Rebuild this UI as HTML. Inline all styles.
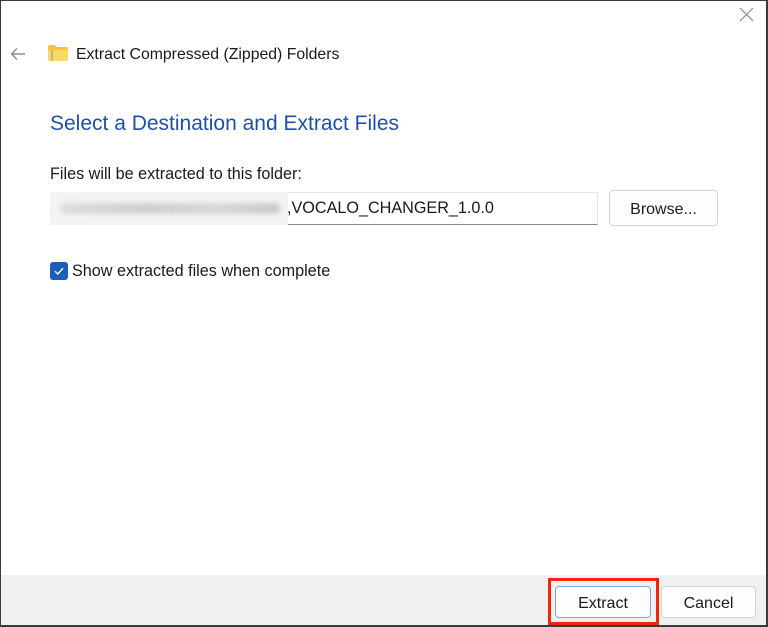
<!DOCTYPE html>
<html><head><meta charset="utf-8"><style>
*{margin:0;padding:0;box-sizing:border-box}
body{width:768px;height:627px;overflow:hidden;background:#fff;font-family:"Segoe UI","Liberation Sans",sans-serif;position:relative}
.frame{position:absolute;left:0;top:0;width:768px;height:627px;border:1px solid #3a3a3a;border-width:1px 2px 2px 1px}
.abs{position:absolute}
.t{font-size:16.2px;color:#1a1a1a;white-space:nowrap}
.btn{position:absolute;background:#fdfdfd;border:1px solid #d4d4d4;border-radius:4px;font-size:16px;color:#1a1a1a;text-align:center}
</style></head><body>
<svg class="abs" style="left:739px;top:7px" width="15" height="15" viewBox="0 0 15 15"><path d="M1 1L14 14M14 1L1 14" stroke="#8a8a8a" stroke-width="1.2"/></svg>
<svg class="abs" style="left:10px;top:47px" width="16" height="14" viewBox="0 0 16 14"><path d="M15 7H2M7 1.5L1.5 7L7 12.5" stroke="#8c8c8c" stroke-width="1.4" fill="none"/></svg>
<svg class="abs" style="left:48px;top:45px" width="20" height="16" viewBox="0 0 20 16"><path d="M0 2Q0 0 2 0H7L9 2H18Q20 2 20 4V14Q20 16 18 16H2Q0 16 0 14Z" fill="#f5c542"/><rect x="0" y="5" width="20" height="11" rx="1.5" fill="#fcd867"/><rect x="3" y="5" width="2" height="11" fill="#b8b8a0"/></svg>
<div class="abs" style="left:76px;top:46px;font-size:15.8px;color:#1a1a1a;white-space:nowrap">Extract Compressed (Zipped) Folders</div>
<div class="abs" style="left:50px;top:112px;font-size:21px;color:#1f4fa8;white-space:nowrap">Select a Destination and Extract Files</div>
<div class="abs t" style="left:50px;top:165px">Files will be extracted to this folder:</div>
<div class="abs" style="left:50px;top:192px;width:238px;height:33px;background:#f3f3f3"></div>
<div class="abs" style="left:60px;top:203px;width:220px;height:11px;background:linear-gradient(90deg,#ddd,#cfcfcf 40%,#d8d8d8 70%,#cacaca);filter:blur(2.5px);border-radius:5px"></div>
<div class="abs" style="left:288px;top:192px;width:310px;height:33px;border:1px solid #e5e5e5;border-left:none;border-bottom:1px solid #8a8a8a"></div>
<div class="abs t" style="left:287px;top:199px">,VOCALO_CHANGER_1.0.0</div>
<div class="btn" style="left:609px;top:190px;width:109px;height:36px;line-height:38px">Browse...</div>
<div class="abs" style="left:50px;top:262px;width:18px;height:18px;background:#1b5fb8;border-radius:3px"></div>
<svg class="abs" style="left:53px;top:265px" width="12" height="12" viewBox="0 0 12 12"><path d="M2 6.3L4.8 9L10 3.2" stroke="#fff" stroke-width="1.4" fill="none"/></svg>
<div class="abs t" style="left:72px;top:262px">Show extracted files when complete</div>
<div class="abs" style="left:0;top:575px;width:768px;height:52px;background:#f0f0f0"></div>
<div class="abs" style="left:548px;top:578px;width:111px;height:47px;border:3px solid #f0250a;"></div>
<div class="btn" style="left:555px;top:586px;width:96px;height:32px;line-height:33px;border-color:#7fa8d8">Extract</div>
<div class="btn" style="left:661px;top:586px;width:95px;height:32px;line-height:33px">Cancel</div>
<div class="frame"></div>
</body></html>
